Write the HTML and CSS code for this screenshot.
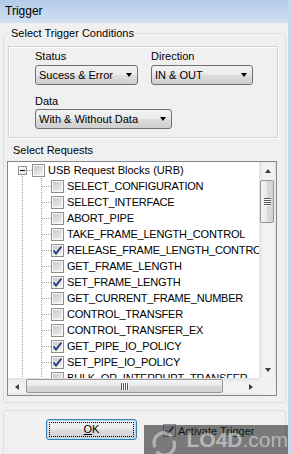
FILE: index.html
```html
<!DOCTYPE html>
<html lang="en">
<head>
    <meta charset="UTF-8">
    <meta name="viewport" content="width=device-width, initial-scale=1.0">
    <title>Trigger</title>
    <link rel="stylesheet" href="styles.css">
</head>
<body>
    <div class="window">
        <div class="titlebar">Trigger</div>

        <fieldset class="group">
            <legend>Select Trigger Conditions</legend>
            <div class="panel">
                <div class="field">
                    <span class="field-label">Status</span>
                    <div class="combo">Sucess &amp; Error<span class="drop"></span></div>
                </div>
                <div class="field">
                    <span class="field-label">Direction</span>
                    <div class="combo">IN &amp; OUT<span class="drop"></span></div>
                </div>
                <div class="field wide">
                    <span class="field-label">Data</span>
                    <div class="combo">With &amp; Without Data<span class="drop"></span></div>
                </div>
            </div>

            <div class="section-label">Select Requests</div>
            <div class="tree">
                <div class="tree-list">
                    <div class="node root"><span class="expander"></span><span class="cb"></span>USB Request Blocks (URB)</div>
                    <div class="node"><span class="cb"></span>SELECT_CONFIGURATION</div>
                    <div class="node"><span class="cb"></span>SELECT_INTERFACE</div>
                    <div class="node"><span class="cb"></span>ABORT_PIPE</div>
                    <div class="node"><span class="cb"></span>TAKE_FRAME_LENGTH_CONTROL</div>
                    <div class="node"><span class="cb"><svg viewBox="0 0 11 11"><path d="M1.5 5.5 L4 8.5 L9.5 1.5"/></svg></span>RELEASE_FRAME_LENGTH_CONTROL</div>
                    <div class="node"><span class="cb"></span>GET_FRAME_LENGTH</div>
                    <div class="node"><span class="cb"><svg viewBox="0 0 11 11"><path d="M1.5 5.5 L4 8.5 L9.5 1.5"/></svg></span>SET_FRAME_LENGTH</div>
                    <div class="node"><span class="cb"></span>GET_CURRENT_FRAME_NUMBER</div>
                    <div class="node"><span class="cb"></span>CONTROL_TRANSFER</div>
                    <div class="node"><span class="cb"></span>CONTROL_TRANSFER_EX</div>
                    <div class="node"><span class="cb"><svg viewBox="0 0 11 11"><path d="M1.5 5.5 L4 8.5 L9.5 1.5"/></svg></span>GET_PIPE_IO_POLICY</div>
                    <div class="node"><span class="cb"><svg viewBox="0 0 11 11"><path d="M1.5 5.5 L4 8.5 L9.5 1.5"/></svg></span>SET_PIPE_IO_POLICY</div>
                    <div class="node"><span class="cb"></span>BULK_OR_INTERRUPT_TRANSFER</div>
                </div>
                <div class="vscroll">
                    <div class="arrow"><span class="tri up"></span></div>
                    <div class="thumb vthumb"><span class="grip-h"></span></div>
                    <div class="fill"></div>
                    <div class="arrow"><span class="tri down"></span></div>
                </div>
                <div class="hscroll">
                    <div class="arrow"><span class="tri left"></span></div>
                    <div class="thumb hthumb"><span class="grip-v"></span></div>
                    <div class="fill"></div>
                    <div class="arrow"><span class="tri right"></span></div>
                </div>
                <div class="corner"></div>
            </div>
        </fieldset>

        <div class="footer">
            <button class="btn"><span class="focus"><u>O</u>K</span></button>
            <label class="check-label"><span class="cb"><svg viewBox="0 0 11 11"><path d="M1.5 5.5 L4 8.5 L9.5 1.5"/></svg></span>Activate Trigger</label>
        </div>

        <div class="watermark">
            <svg class="wm-logo" viewBox="0 0 34 34"><path d="M6 21 A12 12 0 0 1 26 8"/><path d="M28 13 A12 12 0 0 1 8 26"/></svg>
            <span class="wm-text">LO4D<span class="wm-com">.com</span></span>
        </div>
    </div>
</body>
</html>
```

FILE: styles.css
```css
* {
    box-sizing: border-box;
}
body {
    margin: 0;
    font-family: "Liberation Sans", Arial, sans-serif;
    font-size: 11px;
    color: #000;
}
.window {
    position: relative;
    width: 291px;
    height: 454px;
    overflow: hidden;
    background: #f0f0f0;
    border-right: 3px solid #c4d7ed;
}
.titlebar {
    height: 23px;
    line-height: 22px;
    margin-right: -3px;
    padding-left: 5px;
    font-size: 12px;
    background: linear-gradient(#b3cbe8, #d2e1f2);
}

/* group box */
.group {
    margin: 4px 2px 0 3px;
    padding: 0 7px 6px 4px;
    border: 1px solid #d5dfe5;
    border-radius: 3px;
    min-width: 0;
}
.group legend {
    padding: 0 2px;
    margin-left: 1px;
    line-height: 13px;
}
.panel {
    margin-top: 6px;
    padding: 0 0 8px 26px;
    border: 1px solid #d3d3d3;
    box-shadow: inset 1px 1px 0 #fff, 1px 1px 0 #fff;
    display: grid;
    grid-template-columns: 103px 102px;
    column-gap: 13px;
}
.field-label {
    display: block;
    height: 13px;
    line-height: 13px;
    margin-top: 3px;
}
.field .combo {
    margin-top: 2px;
}
.field.wide {
    grid-column: 1 / span 2;
}
.field.wide .field-label {
    margin-top: 10px;
}
.field.wide .combo {
    margin-top: 1px;
    width: 137px;
}
.combo {
    height: 20px;
    display: flex;
    align-items: center;
    justify-content: space-between;
    padding: 0 5px 0 3px;
    border: 1px solid #707070;
    border-radius: 3px;
    background: linear-gradient(#f2f2f2, #ebebeb 48%, #dddddd 52%, #cfcfcf);
    white-space: nowrap;
}
.drop {
    width: 0;
    height: 0;
    border-left: 3.5px solid transparent;
    border-right: 3.5px solid transparent;
    border-top: 4px solid #000;
}
.section-label {
    margin-top: 6px;
    padding-left: 5px;
    line-height: 13px;
}

/* tree view */
.tree {
    margin: 4px 1px 0 -1px;
    height: 235px;
    border: 1px solid #828790;
    background: #fff;
    display: grid;
    grid-template-columns: 1fr 17px;
    grid-template-rows: 1fr 17px;
}
.tree-list {
    overflow: hidden;
    min-width: 0;
    white-space: nowrap;
}
.node {
    height: 16px;
    display: flex;
    align-items: center;
    padding-left: 43px;
    letter-spacing: -0.2px;
    background-image:
        repeating-linear-gradient(#a0a0a0 0 1px, transparent 1px 2px),
        repeating-linear-gradient(#a0a0a0 0 1px, transparent 1px 2px),
        repeating-linear-gradient(to right, #a0a0a0 0 1px, transparent 1px 2px);
    background-size: 1px 16px, 1px 16px, 9px 1px;
    background-position: 14px 0, 33px 0, 34px 8px;
    background-repeat: no-repeat;
}
.node.root {
    padding-left: 0;
    letter-spacing: 0;
    background-image:
        repeating-linear-gradient(#a0a0a0 0 1px, transparent 1px 2px),
        repeating-linear-gradient(to right, #a0a0a0 0 1px, transparent 1px 2px);
    background-size: 1px 4px, 5px 1px;
    background-position: 14px 12px, 19px 8px;
}
.expander {
    width: 9px;
    height: 9px;
    margin: 0 5px 0 10px;
    border: 1px solid #919191;
    background: linear-gradient(#000, #000) center / 5px 1px no-repeat, linear-gradient(135deg, #fff, #e2e2e2);
}
.cb {
    flex: none;
    width: 13px;
    height: 13px;
    margin-right: 3px;
    padding: 1px;
    border: 1px solid #8e8f8f;
    background: linear-gradient(135deg, #c4c7cc, #f3f3f3) content-box, #fafafa;
}
.cb svg {
    display: block;
    width: 11px;
    height: 11px;
    margin: -1px;
    fill: none;
    stroke: #22367a;
    stroke-width: 1.8;
}

/* scrollbars */
.vscroll {
    display: flex;
    flex-direction: column;
    background: linear-gradient(to right, #e1e1e1, #f1f1f1 25%, #f3f3f3 75%, #e7e7e7);
}
.hscroll {
    display: flex;
    background: linear-gradient(#e1e1e1, #f1f1f1 25%, #f3f3f3 75%, #e7e7e7);
}
.corner {
    background: #f0f0f0;
}
.arrow {
    flex: none;
    width: 17px;
    height: 17px;
    display: flex;
    align-items: center;
    justify-content: center;
}
.fill {
    flex: 1;
}
.thumb {
    display: flex;
    align-items: center;
    justify-content: center;
    border: 1px solid #979797;
    border-radius: 2px;
}
.vthumb {
    height: 43px;
    margin: 1px 2px 0 1px;
    background: linear-gradient(to right, #f4f4f4, #e9e9e9 48%, #d9d9d9 52%, #d2d2d2);
}
.hthumb {
    width: 197px;
    margin: 1px 0 2px 1px;
    background: linear-gradient(#f4f4f4, #e9e9e9 48%, #d9d9d9 52%, #d2d2d2);
}
.grip-h {
    width: 7px;
    height: 8px;
    background: repeating-linear-gradient(#5c5c5c 0 1px, #fafafa 1px 2px);
}
.grip-v {
    width: 8px;
    height: 7px;
    background: repeating-linear-gradient(to right, #5c5c5c 0 1px, #fafafa 1px 2px);
}
.tri {
    width: 0;
    height: 0;
}
.tri.up {
    border-left: 3.5px solid transparent;
    border-right: 3.5px solid transparent;
    border-bottom: 4px solid #3e3e3e;
}
.tri.down {
    border-left: 3.5px solid transparent;
    border-right: 3.5px solid transparent;
    border-top: 4px solid #3e3e3e;
}
.tri.left {
    border-top: 3.5px solid transparent;
    border-bottom: 3.5px solid transparent;
    border-right: 4px solid #3e3e3e;
}
.tri.right {
    border-top: 3.5px solid transparent;
    border-bottom: 3.5px solid transparent;
    border-left: 4px solid #3e3e3e;
}

/* bottom area */
.footer {
    margin: 7px 2px 0 3px;
    height: 60px;
    padding: 8px 0 0 42px;
    border: 1px solid #d5dfe5;
    border-radius: 3px;
    display: flex;
    align-items: flex-start;
}
.btn {
    width: 91px;
    height: 21px;
    padding: 2px;
    border: 1px solid #3c7fb1;
    border-radius: 3px;
    background: linear-gradient(#f2f2f2, #ebebeb 48%, #dddddd 52%, #cfcfcf);
    box-shadow: inset 0 0 0 1px #a9def6;
    font: inherit;
    color: #000;
}
.btn .focus {
    display: block;
    height: 100%;
    line-height: 13px;
    border: 1px dotted #000;
}
.check-label {
    display: flex;
    align-items: center;
    margin: 5px 0 0 26px;
}
.check-label .cb {
    margin-right: 2px;
}

/* site watermark laid over the picture */
.watermark {
    position: absolute;
    left: 144px;
    top: 425px;
    right: 0;
    bottom: 0;
    display: flex;
    align-items: center;
    padding-left: 6px;
    background: rgba(35, 35, 35, 0.58);
}
.wm-logo {
    width: 32px;
    height: 32px;
    margin-top: 8px;
    fill: none;
    stroke: rgba(235, 235, 235, 0.5);
    stroke-width: 4;
}
.wm-text {
    margin-left: 8px;
    font: bold 21px "Liberation Sans", Arial, sans-serif;
    color: rgba(225, 225, 225, 0.6);
}
.wm-com {
    font-weight: normal;
}
```
